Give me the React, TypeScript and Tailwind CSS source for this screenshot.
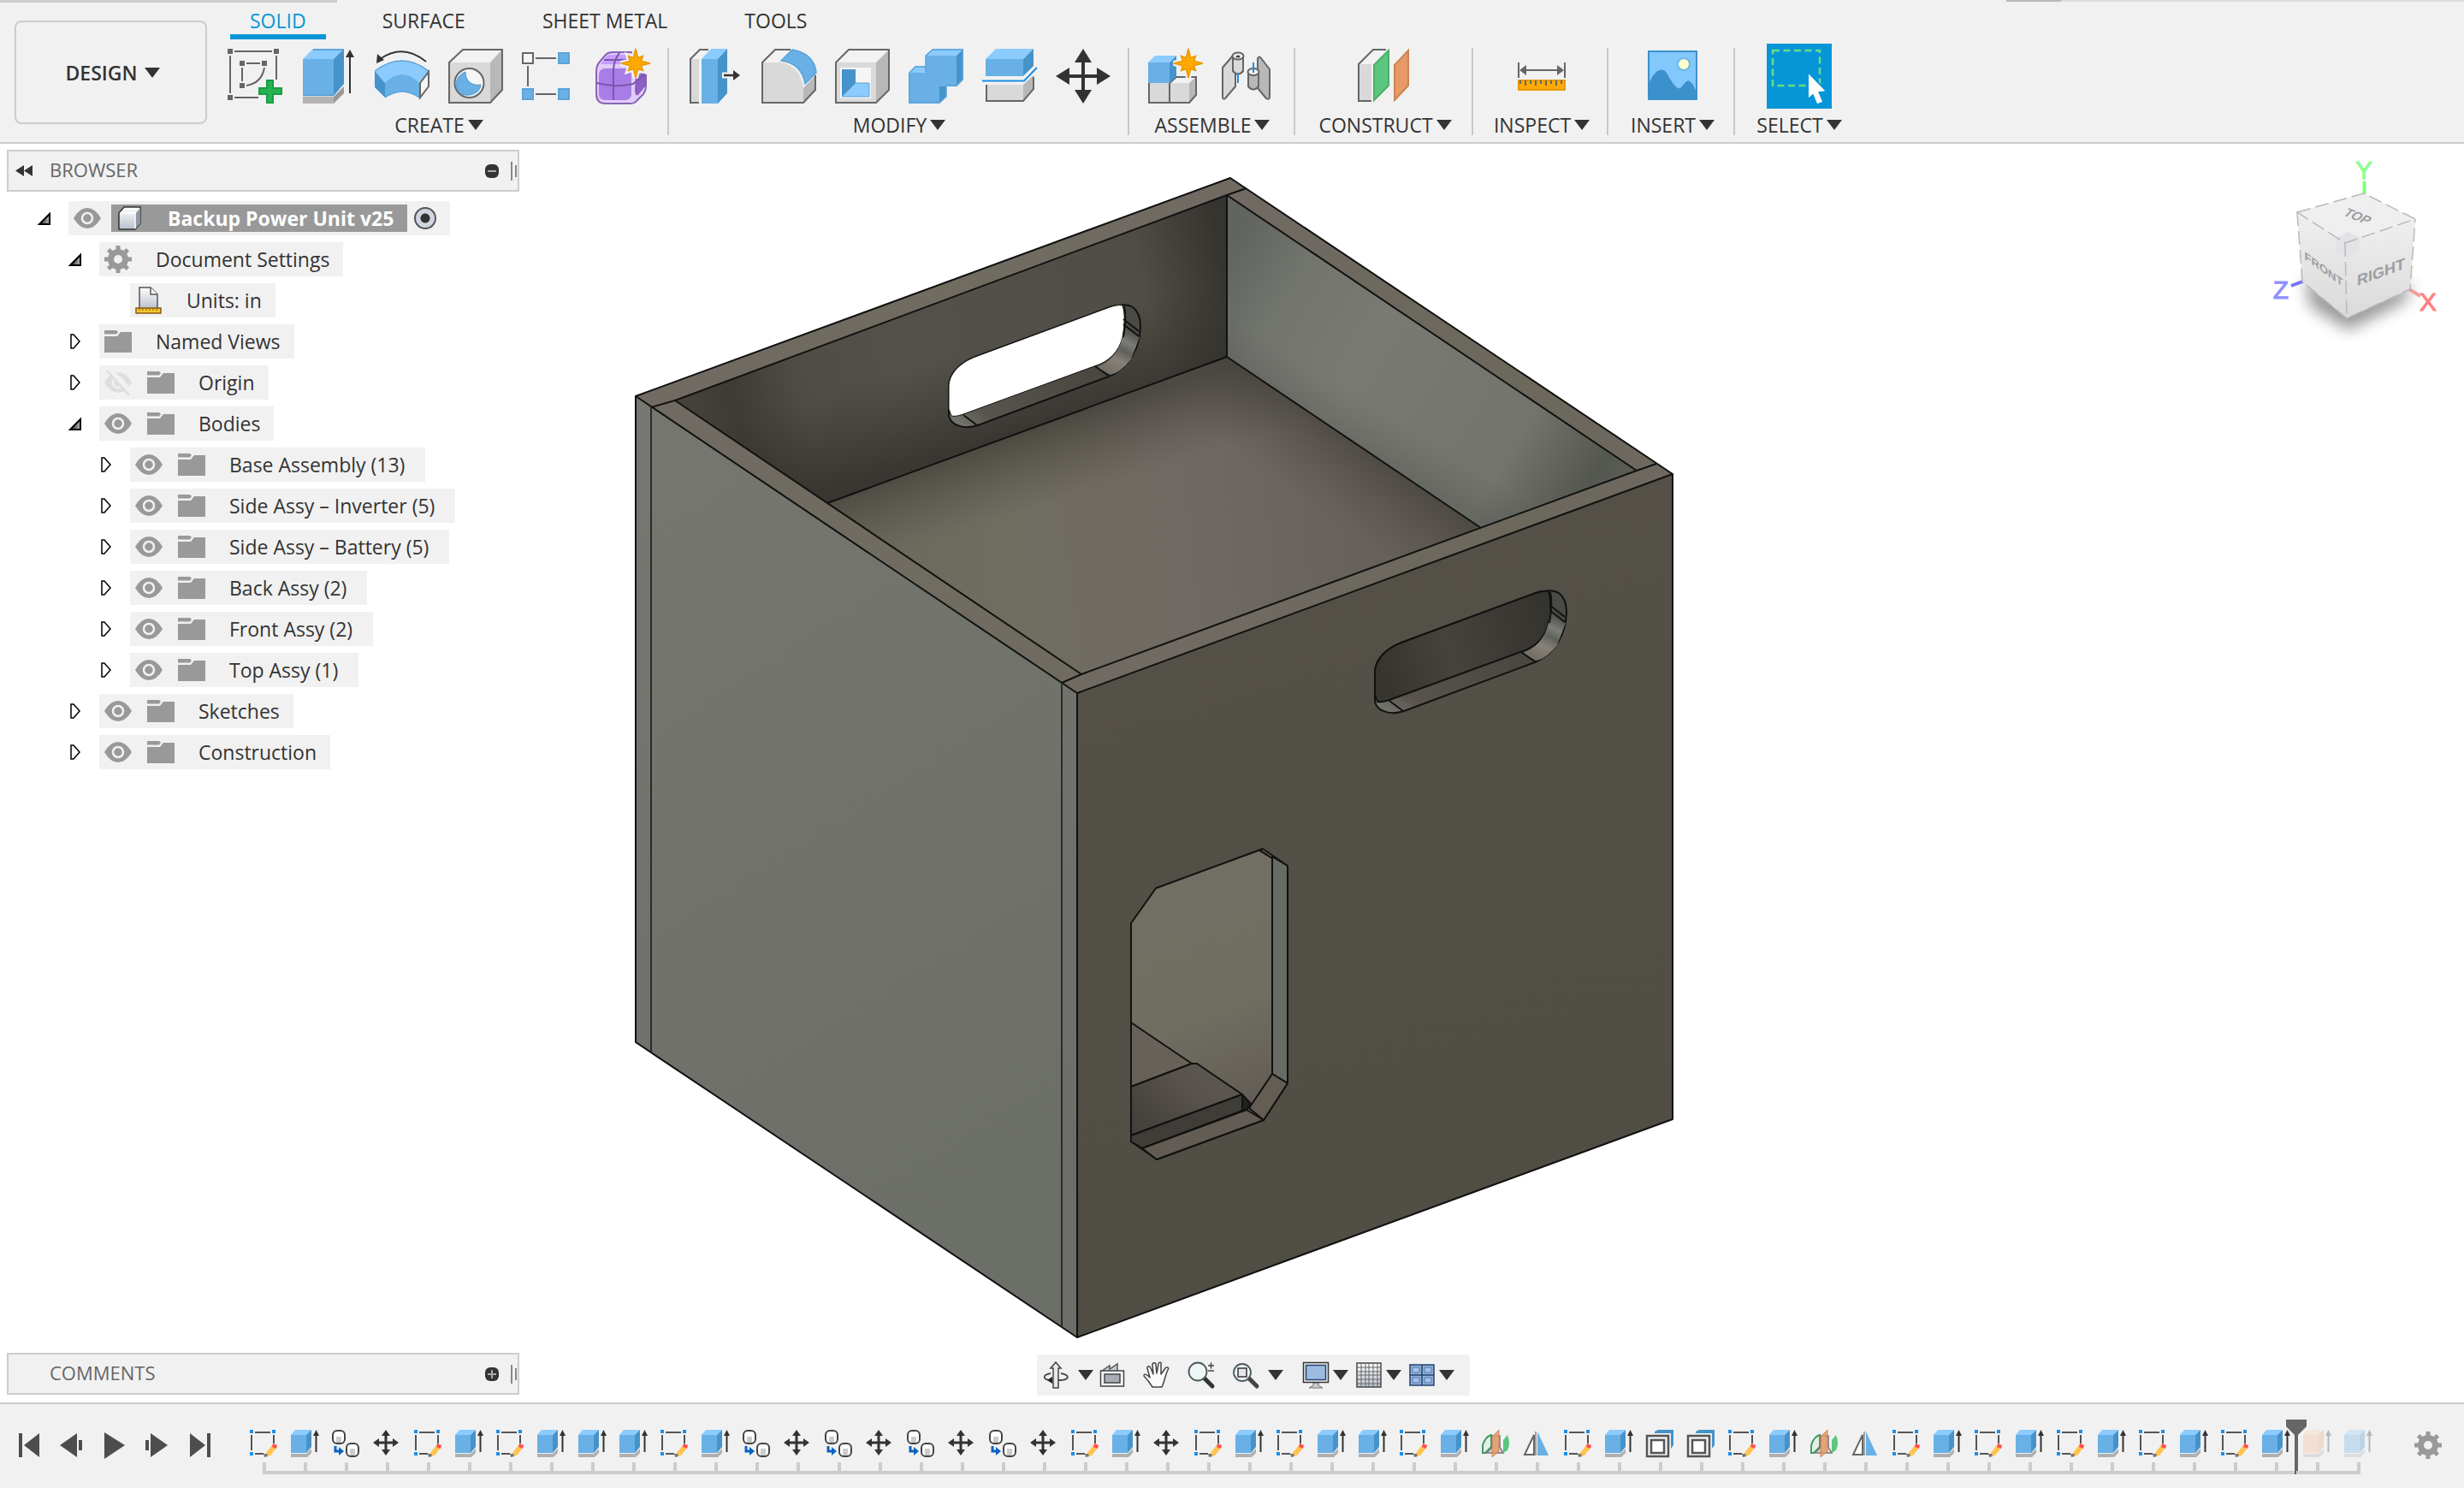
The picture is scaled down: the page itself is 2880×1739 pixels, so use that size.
import React from 'react';

/* ---------- shared colours of the toolbar drawings ---------- */
const BLUE = '#68b0e6';
const LIGHT = '#8ccbfd';
const DARK = '#4593ca';
const EDGE = '#666666';
const FACE = '#d9d9d9';
const SIDE = '#b8b8b8';
const TOP = '#f2f2f2';

function Svg({ w = 64, h = 64, children }: { w?: number; h?: number; children: React.ReactNode }) {
  return (
    <svg width={w} height={h} viewBox={`0 0 ${w} ${h}`} fill="none" className="block shrink-0 overflow-visible" aria-hidden="true">
      {children}
    </svg>
  );
}

function Caret() {
  return (
    <svg width="18" height="12" viewBox="0 0 18 12" className="block shrink-0" aria-hidden="true">
      <path d="M0 0H18L9 12Z" fill="#333" />
    </svg>
  );
}

const Star = ({ x, y }: { x: number; y: number }) => {
  const pts: string[] = [];
  for (let i = 0; i < 16; i++) {
    const r = i % 2 ? 7 : i % 4 === 0 ? 17 : 12;
    const a = (i * Math.PI) / 8 - Math.PI / 2;
    pts.push(`${(x + r * Math.cos(a)).toFixed(1)},${(y + r * Math.sin(a)).toFixed(1)}`);
  }
  return (
    <>
      <polygon points={pts.join(' ')} fill="#f1f1f1" stroke="#f1f1f1" strokeWidth="6" />
      <polygon points={pts.join(' ')} fill="#ffa800" stroke="#e89a00" strokeWidth="1.5" />
    </>
  );
};

/* ---------- create ---------- */
const SketchIcon = () => (
  <Svg>
    <g fill={EDGE}>
      <path d="M0 0h6v6H0zM54 0h6v6h-6zM0 54h6v6H0zM14 14h6v6h-6zM40 14h6v6h-6zM14 40h6v6h-6z" />
    </g>
    <path d="M8 3H52M3 8V52M57 8V36M8 57H36M22 17H38M17 22V38M43 22Q40 40 22 43" stroke={EDGE} strokeWidth="2" />
    <path d="M46 37h7v9h10v7H53v10h-7V53H37v-7h9z" fill="#26b352" stroke="#1a9c43" strokeWidth="2" />
  </Svg>
);

const ExtrudeIcon = () => (
  <Svg>
    <path d="M2 56H38V64H2z" fill="#b3b3b3" />
    <path d="M38 56L50 44V52L38 64z" fill="#999" />
    <path d="M2 12L14 0H50L38 12z" fill={LIGHT} />
    <path d="M2 12H38V55H2z" fill={BLUE} />
    <path d="M38 12L50 0V41L38 55z" fill={DARK} />
    <path d="M2.500 54.500H38M14 1H49" stroke="#4f9bd0" strokeWidth="1.500" />
    <path d="M57 8V52" stroke="#333" strokeWidth="2" />
    <path d="M57 1L62 10H52z" fill="#333" />
  </Svg>
);

const RevolveIcon = () => (
  <Svg>
    <path d="M0 26Q32 2 63 26L52 40Q32 22 12 40z" fill={LIGHT} />
    <path d="M12 40Q32 20 52 40V57Q32 43 12 57z" fill={BLUE} />
    <path d="M0 26L12 40V57L0 45z" fill={DARK} />
    <path d="M0 26Q32 2 63 26M12 57Q32 43 52 57" stroke="#5aa3d8" strokeWidth="1.500" />
    <path d="M53 40L63 27V44L53 57z" fill="#f5f5f5" stroke={EDGE} strokeWidth="2" />
    <path d="M60 15Q33-7 6 12" stroke="#333" strokeWidth="2" />
    <path d="M2 17L3 6L11 13z" fill="#333" />
  </Svg>
);

const HoleIcon = () => (
  <Svg>
    <path d="M1 16L17 1H63L49 16z" fill={TOP} />
    <path d="M1 16H49V63H1z" fill={FACE} />
    <path d="M49 16L63 1V48L49 63z" fill={SIDE} />
    <path d="M1 16L17 1H63V48L49 63H1z" stroke={EDGE} strokeWidth="2" />
    <circle cx="24.500" cy="40" r="17" fill="#f5f5f5" stroke={EDGE} strokeWidth="2" />
    <path d="M20 27C7 32 6 47 16 53C27 57 38 50 38 42C26 44 20 36 20 27z" fill={BLUE} stroke="#4f9bd0" />
  </Svg>
);

const PatternIcon = () => (
  <Svg w={64}>
    <rect x="1" y="5" width="12" height="12" fill="#f5f5f5" stroke={EDGE} strokeWidth="2" />
    <g fill={BLUE} stroke="#5aa3d8" strokeWidth="2">
      <rect x="43" y="5" width="12" height="12" />
      <rect x="1" y="47" width="12" height="12" />
      <rect x="43" y="47" width="12" height="12" />
    </g>
    <path d="M16 11H40M7 20V44M16 53H40" stroke={EDGE} strokeWidth="2" />
  </Svg>
);

const FormIcon = () => (
  <Svg>
    <path d="M1 26Q1 19 6 14L12 7Q15 4 20 4H42L59 30V44Q59 49 56 53L48 61Q46 64 40 64H12Q1 64 1 53z" fill="#e0ccf8" stroke="#8a63b8" strokeWidth="2" />
    <path d="M6 18L13 9Q15 7 19 7H40L32 18z" fill="#c79cff" />
    <rect x="4" y="23" width="38" height="37" rx="7" fill="#a97de6" />
    <path d="M47 30L58 28V44L50 54Q46 56 46 48z" fill="#8c5fc4" />
    <path d="M21 60V24Q22 12 28 5M2 40Q22 46 44 41L58 30M10 13H40" stroke="#7c56ab" strokeWidth="2" />
    <Star x={47} y={17} />
  </Svg>
);

/* ---------- modify ---------- */
const PressPullIcon = () => (
  <Svg>
    <path d="M3 12L14 1H26L14 12V63H3z" fill={TOP} />
    <path d="M3 12H13V63H3z" fill={FACE} />
    <path d="M24 1H14L3 12V63H13" stroke={EDGE} strokeWidth="2" />
    <path d="M16 12L27 0H46L35 12z" fill={LIGHT} />
    <path d="M16 12H35V64H16z" fill={BLUE} />
    <path d="M35 12L46 0V52L35 64z" fill={DARK} />
    <path d="M40 31H60" stroke="#f1f1f1" strokeWidth="7" />
    <path d="M42 31H54" stroke="#333" strokeWidth="2.500" />
    <path d="M53 25L61 31L53 37z" fill="#333" />
  </Svg>
);

const FilletIcon = () => (
  <Svg>
    <path d="M1 16L16 1H34L23 16z" fill={TOP} />
    <path d="M49 46L63 31V48L49 63z" fill={SIDE} />
    <path d="M1 16H22Q46 20 49 46V63H1z" fill={FACE} />
    <path d="M34 1H16L1 16V63H49L63 48V31" stroke={EDGE} strokeWidth="2" />
    <path d="M23 14L36 1Q62 6 64 28L51 41Q47 17 23 14z" fill={BLUE} stroke="#5aa3d8" strokeWidth="1.500" />
  </Svg>
);

const ShellIcon = () => (
  <Svg>
    <path d="M1 16L16 1H63L48 16z" fill={TOP} />
    <path d="M1 16H48V63H1z" fill={FACE} />
    <path d="M48 16L63 1V48L48 63z" fill={SIDE} />
    <path d="M1 16L16 1H63V48L48 63H1z" stroke={EDGE} strokeWidth="2" />
    <path d="M6 22H42V58H6z" fill="#f5f5f5" />
    <path d="M8 24H24V40L8 56z" fill={DARK} />
    <path d="M8 56L24 40H40V56z" fill={LIGHT} stroke="#5aa3d8" />
  </Svg>
);

const CombineIcon = () => (
  <Svg>
    <path d="M20 8L28 0H64L56 8zM0 28L8 20H20V28z" fill={LIGHT} />
    <path d="M20 8H56V44H36V64H0V28H20z" fill={BLUE} />
    <path d="M56 8L64 0V36L56 44zM36 44H44V56L36 64z" fill={DARK} />
    <path d="M20 27V8L28 1H63V36L56 43H44V56L36 63H1V28L8 21H20" stroke="#5aa3d8" strokeWidth="1.500" />
  </Svg>
);

const SplitIcon = () => (
  <Svg>
    <path d="M4 12L16 0H60L48 12z" fill={LIGHT} />
    <path d="M4 12H48V32H4z" fill={BLUE} />
    <path d="M48 12L60 0V20L48 32z" fill={DARK} />
    <path d="M48 42L60 31V47L48 61z" fill={SIDE} />
    <path d="M5 42H48V61H5z" fill={FACE} />
    <path d="M5 42V61H48L60 47V33" stroke={EDGE} strokeWidth="2" />
    <path d="M0 37.500H49L64 22" stroke="#1c8fe8" strokeWidth="2" />
  </Svg>
);

const MoveIcon = () => (
  <Svg>
    <path d="M32 10V54M10 32H54" stroke="#333" strokeWidth="4" />
    <path d="M32 0L42 16H22zM32 64L42 48H22zM0 32L16 22V42zM64 32L48 22V42z" fill="#333" />
  </Svg>
);

/* ---------- assemble, construct, inspect, insert, select ---------- */
const ComponentIcon = () => (
  <Svg>
    <path d="M1 40H25V63H1zM25 40H48V63H25z" fill={FACE} />
    <path d="M25 40L33 33H56L48 40z" fill={TOP} />
    <path d="M48 40L56 33V54L48 63z" fill={SIDE} />
    <path d="M25 40L33 33H56V54L48 63H1V40M25 40V63" stroke={EDGE} strokeWidth="2" />
    <path d="M0 16L8 8H33L25 16z" fill={LIGHT} />
    <path d="M0 16H25V40H0z" fill={BLUE} />
    <path d="M25 16L33 8V33L25 40z" fill={DARK} />
    <Star x={47} y={17} />
  </Svg>
);

const JointIcon = () => (
  <Svg>
    <path d="M1 22L13 8L16 10V44L4 58Q1 60 1 56z" fill={FACE} stroke={EDGE} strokeWidth="2" strokeLinejoin="round" />
    <path d="M13 9V26Q19 33 25 26V9z" fill={FACE} stroke={EDGE} strokeWidth="2" />
    <ellipse cx="19" cy="8.500" rx="6.500" ry="4" fill={TOP} stroke={EDGE} strokeWidth="2" />
    <ellipse cx="19" cy="9" rx="2.500" ry="1.500" fill="#444" />
    <path d="M19 30V40" stroke="#1c8fe8" strokeWidth="2" />
    <path d="M42 11Q44 8 46 11L56 24V57Q55 60 52 58L42 46z" fill={SIDE} stroke={EDGE} strokeWidth="2" strokeLinejoin="round" />
    <path d="M31 27V44Q37 51 43 44V27z" fill={SIDE} stroke={EDGE} strokeWidth="2" />
    <ellipse cx="37" cy="27" rx="6.500" ry="4" fill={TOP} stroke={EDGE} strokeWidth="2" />
    <path d="M37 16V28" stroke="#1c8fe8" strokeWidth="2" />
  </Svg>
);

const PlaneIcon = () => (
  <Svg>
    <path d="M1 18L18 1H34L16 18z" fill={TOP} />
    <path d="M1 18H16V61H1z" fill={FACE} />
    <path d="M33 1H18L1 18V61H16" stroke={EDGE} strokeWidth="2" />
    <path d="M19 19L36 2V43L19 60z" fill="#5bc67d" stroke="#4ab06b" strokeWidth="2" />
    <path d="M43 19L59 2V43L43 60z" fill="#e69a67" stroke="#cf8350" strokeWidth="2" />
  </Svg>
);

const MeasureIcon = () => (
  <Svg w={56}>
    <path d="M1 16V34M55 16V34M6 25H50" stroke={EDGE} strokeWidth="2" />
    <path d="M2 25L10 19V31zM54 25L46 19V31z" fill={EDGE} />
    <rect x="1" y="37" width="54" height="11" fill="#ffaa00" stroke="#e89a00" strokeWidth="2" />
    <path d="M3 37v4M9 37v6M15 37v4M21 37v6M27 37v4M33 37v6M39 37v4M45 37v6M51 37v4" stroke={EDGE} strokeWidth="2" />
  </Svg>
);

const PictureIcon = () => (
  <Svg w={58}>
    <rect x="1" y="3" width="56" height="56" fill="#82c8fb" stroke="#3c91cc" strokeWidth="2" />
    <circle cx="42" cy="18" r="7" fill="#ffffcc" stroke="#6fb6e8" strokeWidth="2" />
    <path d="M1 41C8 24 18 20 23 30C28 39 34 48 38 46C42 42 46 34 50 39C54 42 55 48 57 50V60H1z" fill="#3c91cc" />
  </Svg>
);

const SelectIcon = () => (
  <span className="-my-2 block bg-[#0696d7]">
    <Svg w={76} h={76}>
      <path d="M7 8H62V49H7z" stroke="#66dd88" strokeWidth="2.500" strokeDasharray="8 4.500" />
      <path d="M48 33L70 56L61 57L66 68L59 71L54 60L48 65z" fill="#fff" stroke="#0696d7" strokeWidth="2" />
      <path d="M49 36L68 55L60 56L65 68L59 70L54 58L49 63z" fill="#fff" />
    </Svg>
  </span>
);

type Tool = { name: string; icon: () => React.ReactElement };
const groups: { label: string; box: string; tools: Tool[] }[] = [
  {
    label: 'CREATE',
    box: 'pr-5',
    tools: [
      { name: 'Create Sketch', icon: SketchIcon },
      { name: 'Extrude', icon: ExtrudeIcon },
      { name: 'Revolve', icon: RevolveIcon },
      { name: 'Hole', icon: HoleIcon },
      { name: 'Pattern', icon: PatternIcon },
      { name: 'Create Form', icon: FormIcon },
    ],
  },
  {
    label: 'MODIFY',
    box: 'border-l-2 pl-[22px] pr-5',
    tools: [
      { name: 'Press Pull', icon: PressPullIcon },
      { name: 'Fillet', icon: FilletIcon },
      { name: 'Shell', icon: ShellIcon },
      { name: 'Combine', icon: CombineIcon },
      { name: 'Split Body', icon: SplitIcon },
      { name: 'Move', icon: MoveIcon },
    ],
  },
  {
    label: 'ASSEMBLE',
    box: 'border-l-2 pl-[22px] pr-5',
    tools: [
      { name: 'New Component', icon: ComponentIcon },
      { name: 'Joint', icon: JointIcon },
    ],
  },
  { label: 'CONSTRUCT', box: 'w-52 border-l-2 pl-1', tools: [{ name: 'Offset Plane', icon: PlaneIcon }] },
  { label: 'INSPECT', box: 'w-[158px] border-l-2 pl-1', tools: [{ name: 'Measure', icon: MeasureIcon }] },
  { label: 'INSERT', box: 'w-[148px] border-l-2 pl-1', tools: [{ name: 'Insert Image', icon: PictureIcon }] },
  { label: 'SELECT', box: 'w-[152px] border-l-2', tools: [{ name: 'Window Select', icon: SelectIcon }] },
];

function Toolbar() {
  return (
    <header className="relative flex border-b-2 border-[#cccccc] bg-[#f1f1f1]">
      <span className="absolute left-0 top-0 h-[3px] w-[394px] bg-[#cccccc]" />
      <span className="absolute right-0 top-0 h-0.5 w-[535px] border-l-[64px] border-[#b8b8b8] bg-[#dddddd]" />
      <div className="w-[266px] shrink-0 pb-[21px] pl-[17px] pr-6 pt-6">
        <button className="flex h-[121px] w-full items-center justify-center gap-2 rounded-lg border-2 border-[#cccccc] pl-1 text-[23px] font-semibold">
          DESIGN <Caret />
        </button>
      </div>
      <div className="min-w-0 flex-1">
        <nav className="flex gap-[42px] pl-[3px]" aria-label="Workspace tabs">
          {['SOLID', 'SURFACE', 'SHEET METAL', 'TOOLS'].map((t, i) => (
            <button
              key={t}
              className={
                i === 0
                  ? 'h-[46px] border-b-6 border-[#0696d7] px-[23px] pt-2 leading-8 text-[#0696d7]'
                  : 'h-[46px] border-b-6 border-transparent px-6 pt-2 leading-8'
              }
            >
              {t}
            </button>
          ))}
        </nav>
        <div className="mt-[10px] flex">
          {groups.map((g) => (
            <section key={g.label} className={`flex h-[102px] flex-col items-center border-[#c8c8c8] ${g.box}`}>
              <div className="flex h-[66px] shrink-0 items-center gap-[22px]">
                {g.tools.map(({ name, icon: Icon }) => (
                  <button key={name} aria-label={name} className="block">
                    <Icon />
                  </button>
                ))}
              </div>
              <button className="mt-2 flex h-8 shrink-0 items-center gap-1 leading-8">
                {g.label} <Caret />
              </button>
            </section>
          ))}
        </div>
      </div>
    </header>
  );
}

/* ---------- browser tree ---------- */
const Eye = () => (
  <Svg w={32} h={24}>
    <path d="M0 12Q7 0 16 0T32 12Q25 24 16 24T0 12z" fill="#999" />
    <circle cx="16" cy="12" r="6" fill="#999" stroke="#f1f1f1" strokeWidth="2.500" />
  </Svg>
);
const EyeOff = () => (
  <Svg w={32} h={24}>
    <path d="M0 12Q7 0 16 0T32 12Q25 24 16 24T0 12z" fill="#dedede" />
    <circle cx="16" cy="12" r="6" fill="#dedede" stroke="#f1f1f1" strokeWidth="2.500" />
    <path d="M6-2L32 23" stroke="#f1f1f1" strokeWidth="6" />
    <path d="M3-2L29 27" stroke="#dedede" strokeWidth="2.500" />
  </Svg>
);
const Folder = () => (
  <Svg w={32} h={26}>
    <path d="M0 0H14L16 2L14 4.500H0z" fill="#999" />
    <path d="M0 7H15L19 2H32V26H0z" fill="#999" />
  </Svg>
);
const Gear = () => (
  <Svg w={32} h={32}>
    <circle cx="16" cy="16" r="8.500" stroke="#999" strokeWidth="7" />
    <path
      d="M16 0V8M16 24V32M0 16H8M24 16H32M4.700 4.700L10 10M22 22L27.300 27.300M4.700 27.300L10 22M22 10L27.300 4.700"
      stroke="#999"
      strokeWidth="5"
    />
  </Svg>
);
const UnitsIcon = () => (
  <Svg w={32} h={32}>
    <path d="M5 1H18L26 9V26H5z" fill="url(#paper)" stroke="#555" strokeWidth="1.500" />
    <path d="M18 1V9H26" fill="#fff" stroke="#555" strokeWidth="1.500" />
    <rect x="1" y="25" width="29" height="6" fill="#f3c62f" stroke="#8a5a10" strokeWidth="1.500" />
    <path d="M5 25v3M9 25v3M13 25v3M17 25v3M21 25v3M25 25v3" stroke="#8a5a10" />
  </Svg>
);
const CubeIcon = () => (
  <Svg w={28} h={28}>
    <path d="M1 8L7 1H26V20L20 27H1z" fill="url(#paper)" stroke="#333" strokeWidth="1.500" />
    <path d="M20 9L26 2V20L20 27z" fill="#8f97a6" />
    <path d="M2 8H20V26" stroke="#fff" strokeWidth="1.500" />
  </Svg>
);

function Toggle({ open }: { open?: boolean }) {
  return open ? (
    <Svg w={16} h={18}>
      <path d="M14 4V16H2z" fill="url(#wedge)" stroke="#000" strokeWidth="2" />
    </Svg>
  ) : (
    <Svg w={16} h={18}>
      <path d="M3 1H6L13 9L6 17H3z" fill="#fff" stroke="#000" strokeWidth="1.500" />
    </Svg>
  );
}

type Node = { label: string; level: 0 | 1; open?: boolean; leaf?: boolean; eye?: 'on' | 'off'; icon?: () => React.ReactElement };
const nodes: Node[] = [
  { label: 'Document Settings', level: 0, open: true, icon: Gear },
  { label: 'Units: in', level: 1, leaf: true, icon: UnitsIcon },
  { label: 'Named Views', level: 0 },
  { label: 'Origin', level: 0, eye: 'off' },
  { label: 'Bodies', level: 0, open: true, eye: 'on' },
  { label: 'Base Assembly (13)', level: 1, eye: 'on' },
  { label: 'Side Assy – Inverter (5)', level: 1, eye: 'on' },
  { label: 'Side Assy – Battery (5)', level: 1, eye: 'on' },
  { label: 'Back Assy (2)', level: 1, eye: 'on' },
  { label: 'Front Assy (2)', level: 1, eye: 'on' },
  { label: 'Top Assy (1)', level: 1, eye: 'on' },
  { label: 'Sketches', level: 0, eye: 'on' },
  { label: 'Construction', level: 0, eye: 'on' },
];

function PanelBar({ title, sign, rewind }: { title: string; sign: 'minus' | 'plus'; rewind?: boolean }) {
  return (
    <div className="flex h-[49px] w-[599px] items-center border-2 border-[#cccccc] bg-[#f1f1f1] text-[22px] text-[#666]">
      <button className="ml-2 flex w-10 items-center" aria-label={`Collapse ${title.toLowerCase()}`}>
        {rewind && (
          <Svg w={20} h={13}>
            <path d="M10 0V13L0 6.500zM20 0V13L10 6.500z" fill="#333" />
          </Svg>
        )}
      </button>
      <h2 className="flex-1 pb-1">{title}</h2>
      <button aria-label={sign === 'minus' ? 'Hide' : 'Add comment'} className="mr-3.5">
        <Svg w={16} h={16}>
          <rect width="16" height="16" rx="6" fill="#333" />
          <path d={sign === 'minus' ? 'M3 8H13' : 'M3 8H13M8 3V13'} stroke="#aaa" strokeWidth="2" />
        </Svg>
      </button>
      <Svg w={8} h={22}>
        <path d="M1 0V22M6 4V18" stroke="#888" strokeWidth="2" />
      </Svg>
    </div>
  );
}

function Browser() {
  return (
    <div>
      <PanelBar title="BROWSER" sign="minus" rewind />
      <ul className="mt-[11px] flex flex-col gap-2">
        <li className="flex items-center gap-5 pl-9">
          <button aria-label="Collapse">
            <Toggle open />
          </button>
          <div className="flex h-10 items-center bg-[#f1f1f1] pl-1.5 pr-4">
            <button aria-label="Toggle visibility">
              <Eye />
            </button>
            <span className="ml-3 flex h-8 items-center bg-[#999] pl-2 pr-4 font-bold text-white">
              <CubeIcon />
              <span className="ml-[30px]">Backup Power Unit v25</span>
            </span>
            <input
              type="radio"
              name="active-component"
              defaultChecked
              aria-label="Activate component"
              className="ml-2 size-[26px] appearance-none rounded-full border-2 border-[#555] bg-[radial-gradient(circle,#333_0_5px,#cfd5e2_6px_100%)]"
            />
          </div>
        </li>
        {nodes.map((n) => {
          const Icon = n.icon ?? Folder;
          return (
            <li key={n.label} className={n.level ? 'flex items-center gap-5 pl-[108px]' : 'flex items-center gap-5 pl-[72px]'}>
              {n.leaf ? (
                <span className="w-4" />
              ) : (
                <button aria-label={n.open ? 'Collapse' : 'Expand'}>
                  <Toggle open={n.open} />
                </button>
              )}
              <div className={n.level && n.eye ? 'flex h-10 items-center bg-[#f1f1f1] pl-1.5 pr-6' : 'flex h-10 items-center bg-[#f1f1f1] pl-1.5 pr-4'}>
                {n.eye && (
                  <button aria-label="Toggle visibility" className="mr-[18px]">
                    {n.eye === 'on' ? <Eye /> : <EyeOff />}
                  </button>
                )}
                <Icon />
                <span className="ml-7">{n.label}</span>
              </div>
            </li>
          );
        })}
      </ul>
    </div>
  );
}

/* ---------- 3D model ---------- */
function HandleHole({ through }: { through?: boolean }) {
  return (
    <g strokeLinejoin="round">
      <path
        d="M1109 486V452C1109 437 1122 424 1140 417L1297 359C1304 356 1317 355 1324 359C1331 364 1333 372 1333 382C1332 407 1320 430 1296 440L1143 497C1128 502 1112 498 1109 486z"
        fill="url(#slotWall)"
        stroke="#111"
        strokeWidth="2"
      />
      <path
        d="M1112 486L1109 478V452C1109 437 1122 424 1140 417L1297 359C1303 357 1308 356 1312 357C1315 366 1315 380 1312 394C1308 411 1296 423 1279 428L1126 484C1120 486 1116 487 1112 486z"
        fill={through ? '#ffffff' : 'url(#slotInside)'}
        stroke="#111"
        strokeWidth={through ? 1 : 2}
      />
      <path d="M1314 374Q1320 388 1332 394L1322 420Q1309 436 1298 438L1281 429Q1305 422 1312 394z" fill="url(#slotShine)" />
      <path d="M1280 428L1297 440M1126 485L1142 497M1313 373L1331 387M1313 379L1331 393M1314 358Q1317 370 1313 394" stroke="#111" strokeWidth="2" fill="none" />
    </g>
  );
}

function Model() {
  return (
    <svg viewBox="0 168 2880 1471" className="absolute inset-0 h-full w-full" role="img" aria-label="Wooden box with handle slots">
      <defs>
        <linearGradient id="paper" x1="0" y1="0" x2="0" y2="1">
          <stop offset="0" stopColor="#fff" />
          <stop offset="1" stopColor="#b9c0cd" />
        </linearGradient>
        <linearGradient id="wedge" x1="0" y1="0" x2="1" y2="0">
          <stop offset="0" stopColor="#222" />
          <stop offset="1" stopColor="#bbb" />
        </linearGradient>
        <linearGradient id="leftFace" x1="0" y1="0" x2="0.300" y2="1">
          <stop offset="0" stopColor="#757770" />
          <stop offset="1" stopColor="#6c6e68" />
        </linearGradient>
        <linearGradient id="rightFace" x1="0.200" y1="0" x2="0.400" y2="1">
          <stop offset="0" stopColor="#555149" />
          <stop offset="1" stopColor="#504d45" />
        </linearGradient>
        <linearGradient id="rim" gradientUnits="userSpaceOnUse" x1="743" y1="470" x2="1955" y2="560" spreadMethod="reflect">
          <stop offset="0" stopColor="#706a63" />
          <stop offset="0.300" stopColor="#706c60" />
          <stop offset="0.550" stopColor="#706a63" />
          <stop offset="0.850" stopColor="#6c685c" />
          <stop offset="1" stopColor="#6e6861" />
        </linearGradient>
        <linearGradient id="backWall" gradientUnits="userSpaceOnUse" x1="789" y1="468" x2="1434" y2="320">
          <stop offset="0" stopColor="#47443d" />
          <stop offset="0.100" stopColor="#3d3b35" />
          <stop offset="0.220" stopColor="#4f4c45" />
          <stop offset="0.400" stopColor="#54504a" />
          <stop offset="0.850" stopColor="#504d46" />
          <stop offset="1" stopColor="#36342f" />
        </linearGradient>
        <linearGradient id="wallFoot" gradientUnits="userSpaceOnUse" x1="1170" y1="400" x2="1200" y2="503">
          <stop offset="0" stopColor="#34322d" stopOpacity="0" />
          <stop offset="1" stopColor="#2f2d29" stopOpacity="0.700" />
        </linearGradient>
        <linearGradient id="sideWall" gradientUnits="userSpaceOnUse" x1="1434" y1="300" x2="1900" y2="580">
          <stop offset="0" stopColor="#62645f" />
          <stop offset="0.150" stopColor="#72746e" />
          <stop offset="0.350" stopColor="#787a73" />
          <stop offset="0.740" stopColor="#72746d" />
          <stop offset="0.920" stopColor="#545650" />
          <stop offset="1" stopColor="#5c5e58" />
        </linearGradient>
        <linearGradient id="sideFoot" gradientUnits="userSpaceOnUse" x1="1600" y1="470" x2="1575" y2="510">
          <stop offset="0" stopColor="#4a4b48" stopOpacity="0" />
          <stop offset="1" stopColor="#454643" stopOpacity="0.250" />
        </linearGradient>
        <linearGradient id="floor" gradientUnits="userSpaceOnUse" x1="1000" y1="700" x2="1650" y2="640">
          <stop offset="0" stopColor="#6b685c" />
          <stop offset="0.300" stopColor="#706d61" />
          <stop offset="0.620" stopColor="#6f6963" />
          <stop offset="1" stopColor="#645f58" />
        </linearGradient>
        <linearGradient id="floorBack" gradientUnits="userSpaceOnUse" x1="1200" y1="503" x2="1228" y2="590">
          <stop offset="0" stopColor="#46433c" stopOpacity="0.850" />
          <stop offset="1" stopColor="#55514a" stopOpacity="0" />
        </linearGradient>
        <linearGradient id="floorSide" gradientUnits="userSpaceOnUse" x1="1582" y1="517" x2="1530" y2="590">
          <stop offset="0" stopColor="#46433c" stopOpacity="0.700" />
          <stop offset="1" stopColor="#55514a" stopOpacity="0" />
        </linearGradient>
        <linearGradient id="slotWall" x1="0" y1="1" x2="1" y2="0">
          <stop offset="0" stopColor="#7d7f79" />
          <stop offset="0.150" stopColor="#58544d" />
          <stop offset="0.600" stopColor="#4a4740" />
          <stop offset="1" stopColor="#4a4b47" />
        </linearGradient>
        <linearGradient id="slotInside" x1="0" y1="0.500" x2="1" y2="0.300">
          <stop offset="0" stopColor="#37352f" />
          <stop offset="0.400" stopColor="#46433d" />
          <stop offset="1" stopColor="#35332e" />
        </linearGradient>
        <linearGradient id="slotShine" x1="0" y1="1" x2="0.400" y2="0">
          <stop offset="0" stopColor="#6b645b" />
          <stop offset="0.400" stopColor="#87817a" />
          <stop offset="0.600" stopColor="#5f605b" />
          <stop offset="0.750" stopColor="#7b7d78" />
          <stop offset="1" stopColor="#4a4b47" />
        </linearGradient>
        <linearGradient id="panelGap" x1="0" y1="0" x2="0.200" y2="1">
          <stop offset="0" stopColor="#736f64" />
          <stop offset="0.600" stopColor="#706d61" />
          <stop offset="1" stopColor="#605b53" />
        </linearGradient>
        <linearGradient id="shelf" x1="0" y1="0.600" x2="1" y2="0">
          <stop offset="0" stopColor="#45413c" />
          <stop offset="0.500" stopColor="#59534d" />
          <stop offset="1" stopColor="#5e5952" />
        </linearGradient>
      </defs>

      {/* interior */}
      <path d="M789 468L1434 228V417L967 588z" fill="url(#backWall)" />
      <path d="M789 468L1434 228V417L967 588z" fill="url(#wallFoot)" />
      <path d="M1434 228L1913 550L1731 617L1434 417z" fill="url(#sideWall)" />
      <path d="M1434 228L1913 550L1731 617L1434 417z" fill="url(#sideFoot)" />
      <path d="M967 588L1434 417L1731 617L1264 788z" fill="url(#floor)" />
      <path d="M967 588L1434 417L1731 617L1264 788z" fill="url(#floorBack)" />
      <path d="M967 588L1434 417L1731 617L1264 788z" fill="url(#floorSide)" />
      <HandleHole through />

      {/* outer faces */}
      <path d="M743 463L1259 810V1563L743 1218z" fill="url(#leftFace)" />
      <path d="M1259 810L1955 554V1308L1259 1563z" fill="url(#rightFace)" />
      <path
        fillRule="evenodd"
        d="M743 463L1438 208L1955 554L1259 810zM789 468L1264 788L1913 550L1434 228z"
        fill="url(#rim)"
      />

      <g fill="none" stroke="#111" strokeWidth="2" strokeLinejoin="round">
        <path d="M743 463L1438 208L1955 554V1308L1259 1563L743 1218z" />
        <path d="M789 468L1264 788L1913 550L1434 228z" />
        <path d="M743 463L1259 810L1955 554M1259 810V1563" />
        <path d="M761 476L789 468M1434 228L1457 220M1913 550L1936 542M1241 798L1264 788" />
        <path d="M1434 228V417M967 588L1434 417L1731 617" />
        <path d="M761 476V1229M1241 798V1551" stroke="#2b2c2a" />
      </g>

      <g transform="translate(498 334)">
        <HandleHole />
      </g>

      {/* cut-out window */}
      <g stroke="#111" strokeWidth="2" strokeLinejoin="round">
        <path d="M1322 1079L1351 1038L1476 992L1505 1012V1266L1477 1309L1352 1355L1322 1334z" fill="url(#panelGap)" />
        <path d="M1322 1195L1393 1243L1322 1270z" fill="#67615a" />
        <path d="M1322 1270L1393 1243H1399L1452 1279L1322 1327z" fill="url(#shelf)" />
        <path d="M1322 1327L1452 1279V1298L1335 1342L1322 1334z" fill="#3f3d37" />
        <path d="M1452 1279L1462 1290L1457 1297L1452 1298z" fill="#23221f" />
        <path d="M1335 1342L1457 1297L1477 1309L1352 1355z" fill="#635c54" />
        <path d="M1487 1001L1505 1012V1266L1487 1255z" fill="#696b65" />
        <path d="M1487 1255L1505 1266L1477 1309L1460 1295z" fill="#635d53" />
        <path d="M1476 992L1472 994L1487 1003" fill="#4a4842" />
      </g>
    </svg>
  );
}

function ViewCube() {
  return (
    <svg width="210" height="220" viewBox="2650 178 210 220" className="absolute right-5 top-2.5" role="img" aria-label="View cube">
      <defs>
        <filter id="soft" x="-50%" y="-50%" width="200%" height="200%">
          <feGaussianBlur stdDeviation="9" />
        </filter>
        <linearGradient id="cubeFace" x1="0" y1="0" x2="0" y2="1">
          <stop offset="0" stopColor="#efefef" />
          <stop offset="1" stopColor="#dadada" />
        </linearGradient>
      </defs>
      <path d="M2694 322L2743 352L2818 330L2812 352L2745 386L2700 358z" fill="#000" opacity="0.400" filter="url(#soft)" />
      <path d="M2763.500 212V228" stroke="#7dff7d" strokeWidth="4" />
      <path d="M2678 334L2694 328" stroke="#7474f5" strokeWidth="4" />
      <path d="M2814 337L2829 346" stroke="#f59a9a" strokeWidth="4" />
      <path d="M2685 248L2763 226L2823 256L2741 284z" fill="#efefef" />
      <path d="M2685 248L2741 284L2743 372L2691 329z" fill="url(#cubeFace)" />
      <path d="M2741 284L2823 256L2817 338L2743 372z" fill="url(#cubeFace)" />
      <path d="M2730 278L2745 271L2758 277L2757 295L2743 301L2730 293z" fill="#e1e3e6" />
      <path
        d="M2685 248L2763 226L2823 256L2741 284zM2741 284L2743 372M2685 248L2691 329L2743 372L2817 338L2823 256"
        fill="none"
        stroke="#b9b9b9"
        strokeWidth="1.500"
        strokeDasharray="16 6"
      />
      <g fontFamily='"Liberation Sans Narrow", "Liberation Sans", sans-serif' fontWeight="700" textAnchor="middle" fill="#9b9ea3">
        <text transform="translate(2716 319) skewY(36)" fontSize="13">FRONT</text>
        <text transform="translate(2783 324) skewY(-20)" fontSize="18">RIGHT</text>
        <text transform="translate(2752 257) rotate(22) skewX(-20)" fontSize="15">TOP</text>
      </g>
      <g fontFamily='"Liberation Sans", sans-serif' fontWeight="400" textAnchor="middle" fontSize="30" strokeWidth="1">
        <text x="2763" y="209" fill="#8dff8d" stroke="#8dff8d">Y</text>
        <text x="2666" y="349" fill="#9090ff" stroke="#9090ff">Z</text>
        <text x="2838" y="363" fill="#ff8080" stroke="#ff8080">X</text>
      </g>
    </svg>
  );
}

/* ---------- navigation bar ---------- */
const OrbitIcon = () => (
  <Svg w={32} h={32}>
    <path d="M16 1L22 8H19V31H13V8H10z" fill="#e6e8ee" stroke="#444" strokeWidth="1.500" />
    <path d="M10 14C-1 16 1 22 12 22M22 14C33 16 33 22 19 22" stroke="#444" strokeWidth="1.800" />
    <path d="M6 22L12 18V26z" fill="#222" />
  </Svg>
);
const LookAtIcon = () => (
  <Svg w={32} h={32}>
    <path d="M4 11L13 5V9L22 3V11" fill="#c8ccd0" stroke="#555" strokeWidth="1.500" />
    <rect x="2.500" y="11" width="27" height="18" fill="#f3f4f6" stroke="#444" strokeWidth="1.500" />
    <rect x="7" y="15" width="18" height="10" fill="#a9adb5" stroke="#444" strokeWidth="1.500" />
  </Svg>
);
const HandIcon = () => (
  <Svg w={32} h={32}>
    <path
      d="M11 30C8 25 6 22 1 17C1 14 5 15 8 19L5 8C5 5 8 5 9 8L12 15L11 4C11 1 15 1 15 4L16 14L18 3C19 0 22 1 21 4L21 15L26 8C28 6 31 7 29 10C26 16 25 24 22 30z"
      fill="#fafafa"
      stroke="#444"
      strokeWidth="1.500"
      strokeLinejoin="round"
    />
  </Svg>
);
const ZoomIcon = () => (
  <Svg w={32} h={32}>
    <path d="M20 20L29 29" stroke="#333" strokeWidth="5" strokeLinecap="round" />
    <circle cx="12" cy="12" r="10.500" fill="#eef6f6" stroke="#4a5a5e" strokeWidth="1.800" />
    <path d="M24 5h7M27.500 1.500v7M24 11h7" stroke="#444" strokeWidth="1.500" />
  </Svg>
);
const FitIcon = () => (
  <Svg w={32} h={32}>
    <path d="M20 20L29 29" stroke="#444" strokeWidth="5" strokeLinecap="round" />
    <circle cx="12" cy="13" r="10" fill="#eef6f6" stroke="#4a5a5e" strokeWidth="1.800" />
    <rect x="7" y="8" width="10" height="10" fill="#e4e6ee" stroke="#333" strokeWidth="1.500" />
  </Svg>
);
const DisplayIcon = () => (
  <Svg w={32} h={32}>
    <path d="M13 25H19V28L24 31H8L13 28z" fill="#c9ccd3" stroke="#777" />
    <rect x="1.500" y="1.500" width="29" height="23" fill="#f2f2f2" stroke="#333" strokeWidth="1.500" />
    <rect x="4.500" y="4.500" width="23" height="17" fill="#9dbbe0" stroke="#24426f" strokeWidth="1.500" />
  </Svg>
);
const GridIcon = () => (
  <Svg w={32} h={32}>
    <rect x="2" y="2" width="28" height="28" fill="url(#paper)" stroke="#444" strokeWidth="1.500" />
    <path d="M7 2V30M12 2V30M16 2V30M21 2V30M26 2V30M2 7H30M2 12H30M2 16H30M2 21H30M2 26H30" stroke="#666" />
  </Svg>
);
const ViewportsIcon = () => (
  <Svg w={32} h={32}>
    <rect x="2" y="4" width="28" height="24" fill="#8fb0da" stroke="#24426f" strokeWidth="1.500" />
    <path d="M5 7h8v6H5zM19 7h8v6h-8zM5 19h8v6H5zM19 19h8v6h-8z" fill="#a4c2e6" stroke="#5279ad" />
    <path d="M16 4V28M2 16H30" stroke="#24426f" strokeWidth="1.500" />
  </Svg>
);

const navItems: { name: string; icon: () => React.ReactElement; gap: string; menu?: string }[] = [
  { name: 'Orbit', icon: OrbitIcon, gap: '', menu: 'ml-2.5' },
  { name: 'Look At', icon: LookAtIcon, gap: 'ml-1.5' },
  { name: 'Pan', icon: HandIcon, gap: 'ml-5' },
  { name: 'Zoom', icon: ZoomIcon, gap: 'ml-5' },
  { name: 'Fit', icon: FitIcon, gap: 'ml-5', menu: 'ml-2.5' },
  { name: 'Display Settings', icon: DisplayIcon, gap: 'ml-[22px]', menu: 'ml-1' },
  { name: 'Grid and Snaps', icon: GridIcon, gap: 'ml-2', menu: 'ml-1' },
  { name: 'Viewports', icon: ViewportsIcon, gap: 'ml-2', menu: 'ml-1' },
];

function NavBar() {
  return (
    <div className="absolute bottom-2 left-1/2 ml-[25px] flex h-12 -translate-x-1/2 items-center bg-[#f1f1f1] pl-1.5 pr-[18px]">
      {navItems.map(({ name, icon: Icon, gap, menu }) => (
        <React.Fragment key={name}>
          <button aria-label={name} className={gap}>
            <Icon />
          </button>
          {menu && (
            <button aria-label={`${name} menu`} className={menu}>
              <Caret />
            </button>
          )}
        </React.Fragment>
      ))}
    </div>
  );
}

/* ---------- timeline ---------- */
const TSketch = () => (
  <Svg w={32} h={32}>
    <path d="M0 0h4v4H0zM26 0h4v4h-4zM0 26h4v4H0z" fill="#1c8fe8" />
    <path d="M6 3H24M2 6V24M28 6V16M6 28H16" stroke="#555" strokeWidth="2" />
    <path d="M26 18L31 21L24 30L18 31L19 27z" fill="#ffc34d" />
    <path d="M27 16L32 18L31 22L26 20z" fill="#ff4d4d" />
    <path d="M16 28L20 28L21 31L17 32z" fill="#777" />
  </Svg>
);
const TExtrude = ({ tone }: { tone?: 'orange' | 'faded' }) => (
  <Svg w={32} h={32}>
    <g opacity={tone ? 0.3 : 1}>
      <path d="M0 28H18L24 22V27L19 32H0z" fill="#b0b0b0" />
      <path d="M0 6L5 0H24L18 6z" fill={tone === 'orange' ? '#ffcfae' : LIGHT} />
      <path d="M0 6H18V27H0z" fill={tone === 'orange' ? '#f5b48f' : BLUE} />
      <path d="M18 6L24 0V20L18 27z" fill={tone === 'orange' ? '#e8a47c' : DARK} />
      <path d="M29.500 4V26" stroke="#333" strokeWidth="2" />
      <path d="M29.500 0L33 7H26z" fill="#333" />
    </g>
  </Svg>
);
const TCopy = () => (
  <Svg w={32} h={32}>
    <g fill="#fff" stroke="#444" strokeWidth="2">
      <rect x="1" y="1" width="14" height="15" rx="5" />
      <rect x="17" y="16" width="14" height="15" rx="5" />
    </g>
    <path d="M5 8h6v7H5zM21 22h6v8h-6z" fill="#ccc" />
    <path d="M4 19V25H9" stroke="#0a63bf" strokeWidth="3" />
    <path d="M8 20L14 25L8 30z" fill="#0a63bf" />
  </Svg>
);
const TMove = () => (
  <Svg w={32} h={32}>
    <path d="M15 4V26M4 15H26" stroke="#333" strokeWidth="3" />
    <path d="M15 0L20 7H10zM15 30L20 23H10zM0 15L7 10V20zM30 15L23 10V20z" fill="#333" />
  </Svg>
);
const TPlane = () => (
  <Svg w={32} h={32}>
    <path d="M1 27V18Q4 8 11 6V20L4 27z" fill="#e3efe6" stroke="#3f9b5e" strokeWidth="2" />
    <path d="M5 27L12 21V7H21V20L25 27z" fill="#d9d9d9" stroke="#777" strokeWidth="1.500" />
    <path d="M25 27V12L30 6Q34 16 30 24z" fill="#5bc67d" />
    <path d="M12 8L20 0V25L12 32z" fill="#e69a67" opacity="0.850" stroke="#c97b47" />
  </Svg>
);
const TMirror = () => (
  <Svg w={32} h={32}>
    <path d="M13 6V29H2z" fill="#fff" stroke="#666" strokeWidth="2" />
    <path d="M17 2V30H30z" fill={BLUE} />
    <path d="M15 2V30" stroke="#888" strokeWidth="1.500" />
  </Svg>
);
const TShell = () => (
  <Svg w={32} h={32}>
    <path d="M10 2L14 0H32V18L29 22V4H10z" fill="#4593ca" />
    <path d="M1 7H26V31H1z" fill="#f1f1f1" stroke="#555" strokeWidth="2.500" />
    <path d="M6 12H21V27H6z" fill="#fff" stroke="#555" strokeWidth="2.500" />
  </Svg>
);

const featureIcons: Record<string, { name: string; icon: () => React.ReactElement }> = {
  S: { name: 'Sketch', icon: TSketch },
  E: { name: 'Extrude', icon: () => <TExtrude /> },
  C: { name: 'Copy', icon: TCopy },
  M: { name: 'Move', icon: TMove },
  P: { name: 'Midplane', icon: TPlane },
  R: { name: 'Mirror', icon: TMirror },
  H: { name: 'Shell', icon: TShell },
  O: { name: 'Suppressed extrude', icon: () => <TExtrude tone="orange" /> },
  F: { name: 'Rolled back extrude', icon: () => <TExtrude tone="faded" /> },
};
const features = 'SECMSESEEESECMCMCMCMSEMSESEESEPRSEHHSEPRSESESESESEOF'.split('');
const markerAfter = 49;

const playback: { name: string; d: string; w: string }[] = [
  { name: 'Go to start', d: 'M0 1h4v28H0zM24 1v28L6 15z', w: '' },
  { name: 'Step back', d: 'M20 1v28L0 15zM22 9h4v12h-4z', w: 'ml-[22px]' },
  { name: 'Play', d: 'M0 0L24 15L0 31z', w: 'ml-[26px]' },
  { name: 'Step forward', d: 'M0 9h4v12H0zM6 1L26 15L6 29z', w: 'ml-[22px]' },
  { name: 'Go to end', d: 'M0 1L18 15L0 29zM20 1h4v28h-4z', w: 'ml-[26px]' },
];

function Timeline() {
  return (
    <footer className="flex h-[100px] items-start border-t-2 border-[#cccccc] bg-[#f1f1f1] pl-[22px] pr-[26px]">
      <div className="mt-[33px] flex w-[262px] shrink-0">
        {playback.map((p) => (
          <button key={p.name} aria-label={p.name} className={p.w}>
            <svg width="26" height="31" viewBox="0 0 26 31" className="block" aria-hidden="true">
              <path d={p.d} fill="#4d4d4d" />
            </svg>
          </button>
        ))}
      </div>
      <ol className="flex flex-1 pt-[30px]">
        {features.map((f, i) => {
          const { name, icon: Icon } = featureIcons[f];
          return (
            <li key={i} className="relative w-12">
              <button aria-label={name} className="mx-auto block w-8">
                <Icon />
              </button>
              <div className="flex pt-1.5">
                <span className={i === 0 ? 'h-3.5 w-[23px]' : 'h-3.5 w-[23px] border-b-4 border-[#ccc]'} />
                <span className="h-3.5 w-1 bg-[#ccc]" />
                <span className={i === features.length - 1 ? 'h-3.5 flex-1' : 'h-3.5 flex-1 border-b-4 border-[#ccc]'} />
              </div>
              {i === markerAfter && (
                <svg width="24" height="64" viewBox="0 0 24 64" className="absolute -right-3 -top-3" aria-label="Timeline marker">
                  <path d="M0 0H24V8L14 18V64H10V18L0 8z" fill="#666" />
                </svg>
              )}
            </li>
          );
        })}
      </ol>
      <button aria-label="Settings" className="mt-8">
        <Gear />
      </button>
    </footer>
  );
}

export default function App() {
  return (
    <div className="flex min-h-screen flex-col bg-white font-['Open_Sans',sans-serif] text-[23px] leading-8 text-[#333]">
      <Toolbar />
      <main className="relative flex flex-1 flex-col">
        <Model />
        <div className="relative flex flex-1 flex-col justify-between pb-[9px] pl-2 pt-[7px]">
          <Browser />
          <PanelBar title="COMMENTS" sign="plus" />
        </div>
        <ViewCube />
        <NavBar />
      </main>
      <Timeline />
    </div>
  );
}
